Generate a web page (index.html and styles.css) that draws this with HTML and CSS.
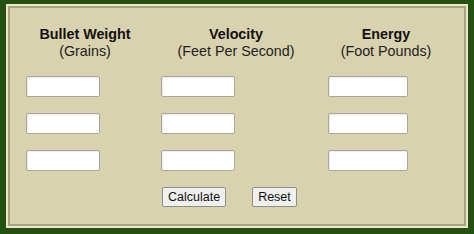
FILE: index.html
```html
<!DOCTYPE html>
<html lang="en">
<head>
    <meta charset="UTF-8">
    <title>Bullet Energy Calculator</title>
    <link rel="stylesheet" href="styles.css">
</head>
<body>
    <div class="frame">
        <div class="panel">
            <div class="calc-grid">
                <div class="col-head"><strong>Bullet Weight</strong><span>(Grains)</span></div>
                <div class="col-head"><strong>Velocity</strong><span>(Feet Per Second)</span></div>
                <div class="col-head"><strong>Energy</strong><span>(Foot Pounds)</span></div>

                <div class="cell"><input type="text" class="field"></div>
                <div class="cell"><input type="text" class="field"></div>
                <div class="cell"><input type="text" class="field wide"></div>

                <div class="cell"><input type="text" class="field"></div>
                <div class="cell"><input type="text" class="field"></div>
                <div class="cell"><input type="text" class="field wide"></div>

                <div class="cell"><input type="text" class="field"></div>
                <div class="cell"><input type="text" class="field"></div>
                <div class="cell"><input type="text" class="field wide"></div>
            </div>
            <div class="actions">
                <button class="btn">Calculate</button>
                <button class="btn">Reset</button>
            </div>
        </div>
    </div>
</body>
</html>
```
FILE: styles.css
```css
body {
    margin: 0;
    font-family: 'Liberation Sans', Arial, sans-serif;
    color: #111;
}
.frame {
    width: 474px;
    height: 234px;
    box-sizing: border-box;
    background: #245012;
    padding: 4px 6px 6px 6px;
}
.panel {
    height: 100%;
    box-sizing: border-box;
    background: #d9d2ae;
    border: 2px solid #ece8c8;
    box-shadow: inset 0 0 0 2px #a7a387;
    padding: 20px 0 0 18px;
}
.calc-grid {
    display: grid;
    grid-template-columns: 118px 150px 116px;
    column-gap: 17px;
    row-gap: 16px;
}
.col-head {
    text-align: center;
    font-size: 14.3px;
    line-height: 17px;
}
.col-head strong,
.col-head span {
    display: block;
}
.col-head span {
    color: #222;
}
.field {
    display: block;
    width: 74px;
    height: 21px;
    box-sizing: border-box;
    margin: 0;
    border: 1px solid #a9a79c;
    border-radius: 2px;
    background: #fff;
    box-shadow: inset 1px 1px 1px rgba(0,0,0,0.08);
}
.field.wide {
    width: 80px;
}
.actions {
    display: flex;
    gap: 26px;
    padding-left: 136px;
    margin-top: 16px;
}
.btn {
    font-family: 'Liberation Sans', Arial, sans-serif;
    font-size: 12.5px;
    height: 20px;
    padding: 0 5px;
    background: #f0f0ee;
    color: #111;
    border: 1px solid #8f8f8a;
    border-radius: 2px;
}
```
